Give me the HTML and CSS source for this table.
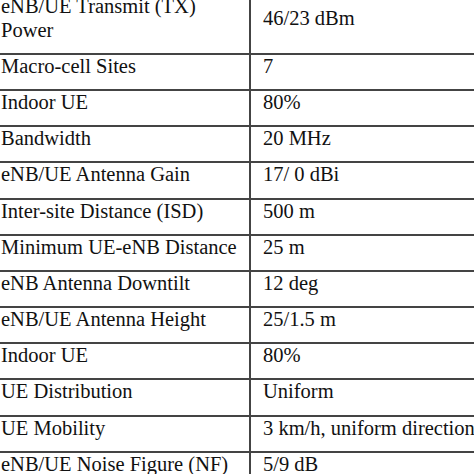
FILE: index.html
```html
<!DOCTYPE html>
<html>
<head>
<meta charset="utf-8">
<link rel="stylesheet" href="styles.css">
</head>
<body>
<div class="wrap">
<table class="params">
<colgroup><col class="c1"><col class="c2"></colgroup>
<tr><td class="wrapcell">eNB/UE Transmit (TX)<br>Power</td><td>46/23 dBm</td></tr>
<tr><td>Macro-cell Sites</td><td>7</td></tr>
<tr><td>Indoor UE</td><td>80%</td></tr>
<tr><td>Bandwidth</td><td>20 MHz</td></tr>
<tr><td>eNB/UE Antenna Gain</td><td>17/ 0 dBi</td></tr>
<tr><td>Inter-site Distance (ISD)</td><td>500 m</td></tr>
<tr><td>Minimum UE-eNB Distance</td><td>25 m</td></tr>
<tr><td>eNB Antenna Downtilt</td><td>12 deg</td></tr>
<tr><td>eNB/UE Antenna Height</td><td>25/1.5 m</td></tr>
<tr><td>Indoor UE</td><td>80%</td></tr>
<tr><td>UE Distribution</td><td>Uniform</td></tr>
<tr><td>UE Mobility</td><td>3 km/h, uniform direction</td></tr>
<tr><td>eNB/UE Noise Figure (NF)</td><td>5/9 dB</td></tr>
</table>
</div>
</body>
</html>
```
FILE: styles.css
```css
html, body {
  margin: 0;
  padding: 0;
  background: #ffffff;
  overflow: hidden;
  width: 474px;
  height: 474px;
}
.wrap {
  margin-top: -7px;
  margin-left: -13px;
  width: 620px;
}
.params {
  border-collapse: collapse;
  table-layout: fixed;
  width: 620px;
  font-family: "Liberation Serif", "Times New Roman", serif;
  font-size: 20.5px;
  line-height: 23.6px;
  color: #111111;
}
.c1 { width: 262px; }
.c2 { width: 358px; }
.params td {
  border: 2px solid #444444;
  padding: 0 12px 10.6px 12px;
  vertical-align: middle;
  white-space: nowrap;
  text-align: left;
}
.params td.wrapcell {
  vertical-align: top;
}
```
